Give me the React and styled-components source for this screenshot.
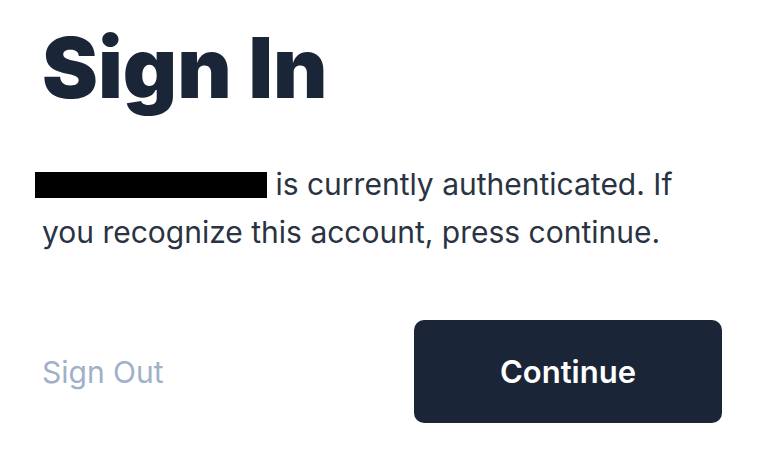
import React from 'react';
import styled, { createGlobalStyle } from 'styled-components';

const GlobalStyle = createGlobalStyle`
  html, body {
    margin: 0;
    padding: 0;
    background: #ffffff;
  }

  body {
    font-family: Inter, "Noto Sans", sans-serif;
    -webkit-font-smoothing: antialiased;
  }
`;

const Page = styled.main`
  width: 768px;
  height: 464px;
  box-sizing: border-box;
  padding: 17px 46px 0 42px;
  display: flex;
  flex-direction: column;
`;

const Heading = styled.h1`
  margin: 0;
  font-size: 84px;
  font-weight: 900;
  line-height: normal;
  color: #1a2538;
`;

const Message = styled.p`
  margin: 42px 0 0;
  font-size: 30px;
  line-height: 48px;
  color: #2a3342;
`;

const Redacted = styled.span`
  display: inline-block;
  width: 232px;
  height: 26px;
  margin-left: -7px;
  background: #000000;
  vertical-align: -3px;
`;

const Actions = styled.div`
  margin-top: 64px;
  display: flex;
  align-items: center;
  justify-content: space-between;
`;

const SignOut = styled.button`
  padding: 0;
  border: 0;
  background: none;
  font-family: inherit;
  font-size: 30px;
  font-weight: 400;
  color: #9fb0c8;
  cursor: pointer;
`;

const Continue = styled.button`
  width: 308px;
  height: 103px;
  border: 0;
  border-radius: 10px;
  background: #1a2538;
  color: #ffffff;
  font-family: inherit;
  font-size: 31px;
  font-weight: 600;
  cursor: pointer;
`;

const App = () => (
  <>
    <GlobalStyle />
    <Page>
      <Heading>Sign In</Heading>
      <Message>
        <Redacted /> is currently authenticated. If you recognize this account, press continue.
      </Message>
      <Actions>
        <SignOut>Sign Out</SignOut>
        <Continue>Continue</Continue>
      </Actions>
    </Page>
  </>
);

export default App;
